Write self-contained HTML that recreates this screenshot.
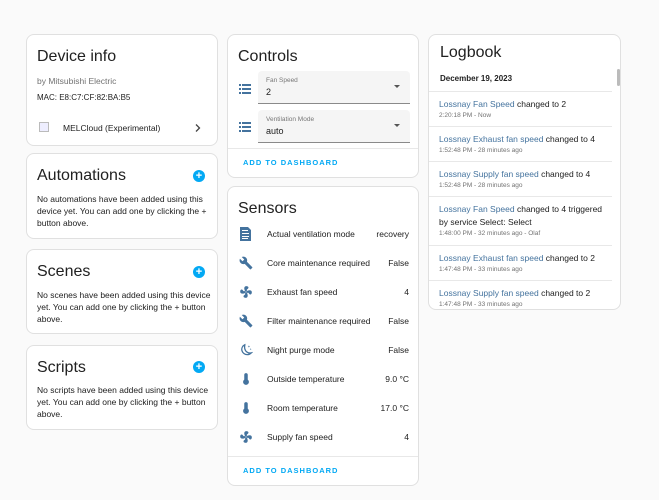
<!DOCTYPE html>
<html><head><meta charset="utf-8"><style>
*{box-sizing:border-box;margin:0;padding:0}
body{width:659px;height:500px;background:#fafafa;font-family:"Liberation Sans",Arial,sans-serif;color:#212121;position:relative;overflow:hidden}
.card{position:absolute;background:#fff;border:1px solid #e0e0e0;border-radius:8px}
.h{position:absolute;font-size:16px;color:#212121}
.t{position:absolute;font-size:8.5px;line-height:12px}
.plus{position:absolute;width:12px;height:12px;border-radius:50%;background:#03a9f4;color:#fff;font-size:11px;line-height:12px;text-align:center;font-weight:bold}
.ic{position:absolute;fill:#44739e}
.btn{position:absolute;font-size:7.5px;letter-spacing:1px;color:#03a9f4;font-weight:bold}
.sel{position:absolute;background:#f5f5f5;border-bottom:1px solid #8a8a8a;border-radius:4px 4px 0 0}
.lab{position:absolute;font-size:6.5px;color:#777;left:8px;top:6px}
.val{position:absolute;font-size:9px;left:8px;top:16px}
.arr{position:absolute;right:10px;top:14px;width:0;height:0;border-left:3.5px solid transparent;border-right:3.5px solid transparent;border-top:3.5px solid #555}
.row{position:absolute;left:0;right:0;height:29px;font-size:8.5px}
.row .n{position:absolute;left:39px;top:8px}
.row .v{position:absolute;right:9px;top:8px}
.row svg{position:absolute;left:11px;top:6px}
.le{position:absolute;left:0;right:8px;border-top:1px solid #e8e8e8;font-size:8.5px}
.le a{color:#44739e;text-decoration:none}
.le .a{position:absolute;left:10px;top:6px;line-height:13px}
.le .s{position:absolute;left:10px;font-size:6.5px;color:#727272}
</style></head><body>

<div class="card" style="left:26px;top:34px;width:192px;height:112px">
<div class="h" style="left:10px;top:13px">Device info</div>
<div class="t" style="left:10px;top:40px;color:#727272">by Mitsubishi Electric</div>
<div class="t" style="left:10px;top:57px;font-size:8px">MAC: E8:C7:CF:82:BA:B5</div>
<div style="position:absolute;left:12px;top:87px;width:10px;height:10px;border:1px solid #bbb;background:#eef"></div>
<div class="t" style="left:36px;top:87px">MELCloud (Experimental)</div>
<svg style="position:absolute;left:168px;top:89px" width="6" height="8" viewBox="0 0 6 8"><path d="M1 0.5L4.5 4 1 7.5" fill="none" stroke="#444" stroke-width="1.3"/></svg>
</div>

<div class="card" style="left:26px;top:153px;width:192px;height:86px">
<div class="h" style="left:10px;top:13px">Automations</div>
<div class="plus" style="left:166px;top:16px">+</div>
<div class="t" style="left:10px;top:39px;width:180px;white-space:nowrap">No automations have been added using this<br>device yet. You can add one by clicking the +<br>button above.</div>
</div>
<div class="card" style="left:26px;top:249px;width:192px;height:85px">
<div class="h" style="left:10px;top:13px">Scenes</div>
<div class="plus" style="left:166px;top:16px">+</div>
<div class="t" style="left:10px;top:39px;width:178px">No scenes have been added using this device yet. You can add one by clicking the + button above.</div>
</div>
<div class="card" style="left:26px;top:345px;width:192px;height:85px">
<div class="h" style="left:10px;top:13px">Scripts</div>
<div class="plus" style="left:166px;top:15px">+</div>
<div class="t" style="left:10px;top:38px;width:178px">No scripts have been added using this device yet. You can add one by clicking the + button above.</div>
</div>

<div class="card" style="left:227px;top:34px;width:192px;height:144px">
<div class="h" style="left:10px;top:13px">Controls</div>
<svg class="ic" style="left:11px;top:49px" width="12" height="10" viewBox="0 0 12 10"><rect x="0" y="0" width="2" height="2"/><rect x="3" y="0" width="9" height="2"/><rect x="0" y="4" width="2" height="2"/><rect x="3" y="4" width="9" height="2"/><rect x="0" y="8" width="2" height="2"/><rect x="3" y="8" width="9" height="2"/></svg>
<div class="sel" style="left:30px;top:36px;width:152px;height:33px"><div class="lab">Fan Speed</div><div class="val">2</div><div class="arr"></div></div>
<svg class="ic" style="left:11px;top:87px" width="12" height="10" viewBox="0 0 12 10"><rect x="0" y="0" width="2" height="2"/><rect x="3" y="0" width="9" height="2"/><rect x="0" y="4" width="2" height="2"/><rect x="3" y="4" width="9" height="2"/><rect x="0" y="8" width="2" height="2"/><rect x="3" y="8" width="9" height="2"/></svg>
<div class="sel" style="left:30px;top:75px;width:152px;height:33px"><div class="lab">Ventilation Mode</div><div class="val">auto</div><div class="arr"></div></div>
<div style="position:absolute;left:0;right:0;top:113px;border-top:1px solid #e8e8e8"></div>
<div class="btn" style="left:15px;top:123px">ADD TO DASHBOARD</div>
</div>

<div class="card" style="left:227px;top:186px;width:192px;height:300px">
<div class="h" style="left:10px;top:13px">Sensors</div>
<div class="row" style="top:34px"><svg class="ic" width="12" height="14" viewBox="0 0 12 14"><path d="M1 0h8l3 3v11H1zM3 3h6v1H3zM3 6h7v1H3zM3 9h7v1H3zM3 11h6v1H3z" fill-rule="evenodd"/></svg><span class="n">Actual ventilation mode</span><span class="v">recovery</span></div>
<div class="row" style="top:63px"><svg class="ic" width="14" height="14" viewBox="0 0 24 24"><path d="M22.7 19l-9.1-9.1c.9-2.3.4-5-1.5-6.9-2-2-5-2.4-7.4-1.3L9 6 6 9 1.6 4.7C.4 7.1.9 10.1 2.9 12.1c1.9 1.9 4.6 2.4 6.9 1.5l9.1 9.1c.4.4 1 .4 1.4 0l2.3-2.3c.5-.4.5-1.1.1-1.4z"/></svg><span class="n">Core maintenance required</span><span class="v">False</span></div>
<div class="row" style="top:92px"><svg class="ic" width="14" height="14" viewBox="0 0 24 24"><path d="M12 11a1 1 0 100 2 1 1 0 000-2m.5-9c4.5 0 4.6 3.57 2.25 4.75-.99.49-1.43 1.54-1.62 2.47.48.2.9.51 1.22.91 3.7-2 7.68-1.21 7.68 2.37 0 4.5-3.57 4.6-4.75 2.24-.5-.99-1.56-1.43-2.49-1.62-.2.48-.51.89-.91 1.22 2 3.69 1.2 7.66-2.38 7.66-4.5 0-4.59-3.58-2.24-4.76.98-.49 1.42-1.53 1.62-2.45-.49-.2-.92-.52-1.24-.92C5.96 15.8 2 15 2 11.42 2 6.92 5.56 6.82 6.74 9.18c.5.99 1.55 1.42 2.48 1.61.19-.48.5-.89.9-1.21C8.12 5.88 8.93 2 12.5 2z"/></svg><span class="n">Exhaust fan speed</span><span class="v">4</span></div>
<div class="row" style="top:121px"><svg class="ic" width="14" height="14" viewBox="0 0 24 24"><path d="M22.7 19l-9.1-9.1c.9-2.3.4-5-1.5-6.9-2-2-5-2.4-7.4-1.3L9 6 6 9 1.6 4.7C.4 7.1.9 10.1 2.9 12.1c1.9 1.9 4.6 2.4 6.9 1.5l9.1 9.1c.4.4 1 .4 1.4 0l2.3-2.3c.5-.4.5-1.1.1-1.4z"/></svg><span class="n">Filter maintenance required</span><span class="v">False</span></div>
<div class="row" style="top:150px"><svg class="ic" width="14" height="14" viewBox="0 0 24 24"><path d="M10 3C6 5 4 9 5 13s5 7 9 7c3 0 5-1 7-3-5 1-10-2-11-7-1-3 0-5 0-7z" fill="none" stroke="#44739e" stroke-width="2.2"/><path d="M17 4l.7 1.5L19 6l-1.3.5L17 8l-.7-1.5L15 6l1.3-.5zM20 9l.5 1 1 .5-1 .5-.5 1-.5-1-1-.5 1-.5z"/></svg><span class="n">Night purge mode</span><span class="v">False</span></div>
<div class="row" style="top:179px"><svg class="ic" width="14" height="14" viewBox="0 0 24 24"><path d="M15 13V5a3 3 0 00-6 0v8a5 5 0 106 0z"/></svg><span class="n">Outside temperature</span><span class="v">9.0 °C</span></div>
<div class="row" style="top:208px"><svg class="ic" width="14" height="14" viewBox="0 0 24 24"><path d="M15 13V5a3 3 0 00-6 0v8a5 5 0 106 0z"/></svg><span class="n">Room temperature</span><span class="v">17.0 °C</span></div>
<div class="row" style="top:237px"><svg class="ic" width="14" height="14" viewBox="0 0 24 24"><path d="M12 11a1 1 0 100 2 1 1 0 000-2m.5-9c4.5 0 4.6 3.57 2.25 4.75-.99.49-1.43 1.54-1.62 2.47.48.2.9.51 1.22.91 3.7-2 7.68-1.21 7.68 2.37 0 4.5-3.57 4.6-4.75 2.24-.5-.99-1.56-1.43-2.49-1.62-.2.48-.51.89-.91 1.22 2 3.69 1.2 7.66-2.38 7.66-4.5 0-4.59-3.58-2.24-4.76.98-.49 1.42-1.53 1.62-2.45-.49-.2-.92-.52-1.24-.92C5.96 15.8 2 15 2 11.42 2 6.92 5.56 6.82 6.74 9.18c.5.99 1.55 1.42 2.48 1.61.19-.48.5-.89.9-1.21C8.12 5.88 8.93 2 12.5 2z"/></svg><span class="n">Supply fan speed</span><span class="v">4</span></div>
<div style="position:absolute;left:0;right:0;top:269px;border-top:1px solid #e8e8e8"></div>
<div class="btn" style="left:15px;top:279px">ADD TO DASHBOARD</div>
</div>

<div class="card" style="left:428px;top:34px;width:193px;height:276px;overflow:hidden">
<div class="h" style="left:11px;top:9px">Logbook</div>
<div class="t" style="left:11px;top:38px;font-weight:bold;font-size:8px">December 19, 2023</div>
<div style="position:absolute;left:188px;top:34px;width:3px;height:17px;background:#bbb;border-radius:2px"></div>
<div class="le" style="top:56px;height:35px"><div class="a"><a>Lossnay Fan Speed</a> changed to 2</div><div class="s" style="top:20px">2:20:18 PM - Now</div></div>
<div class="le" style="top:91px;height:35px"><div class="a"><a>Lossnay Exhaust fan speed</a> changed to 4</div><div class="s" style="top:20px">1:52:48 PM - 28 minutes ago</div></div>
<div class="le" style="top:126px;height:35px"><div class="a"><a>Lossnay Supply fan speed</a> changed to 4</div><div class="s" style="top:20px">1:52:48 PM - 28 minutes ago</div></div>
<div class="le" style="top:161px;height:49px"><div class="a" style="width:165px"><a>Lossnay Fan Speed</a> changed to 4 triggered by service Select: Select</div><div class="s" style="top:33px">1:48:00 PM - 32 minutes ago - Olaf</div></div>
<div class="le" style="top:210px;height:35px"><div class="a"><a>Lossnay Exhaust fan speed</a> changed to 2</div><div class="s" style="top:20px">1:47:48 PM - 33 minutes ago</div></div>
<div class="le" style="top:245px;height:35px"><div class="a"><a>Lossnay Supply fan speed</a> changed to 2</div><div class="s" style="top:20px">1:47:48 PM - 33 minutes ago</div></div>
</div>
</body></html>
